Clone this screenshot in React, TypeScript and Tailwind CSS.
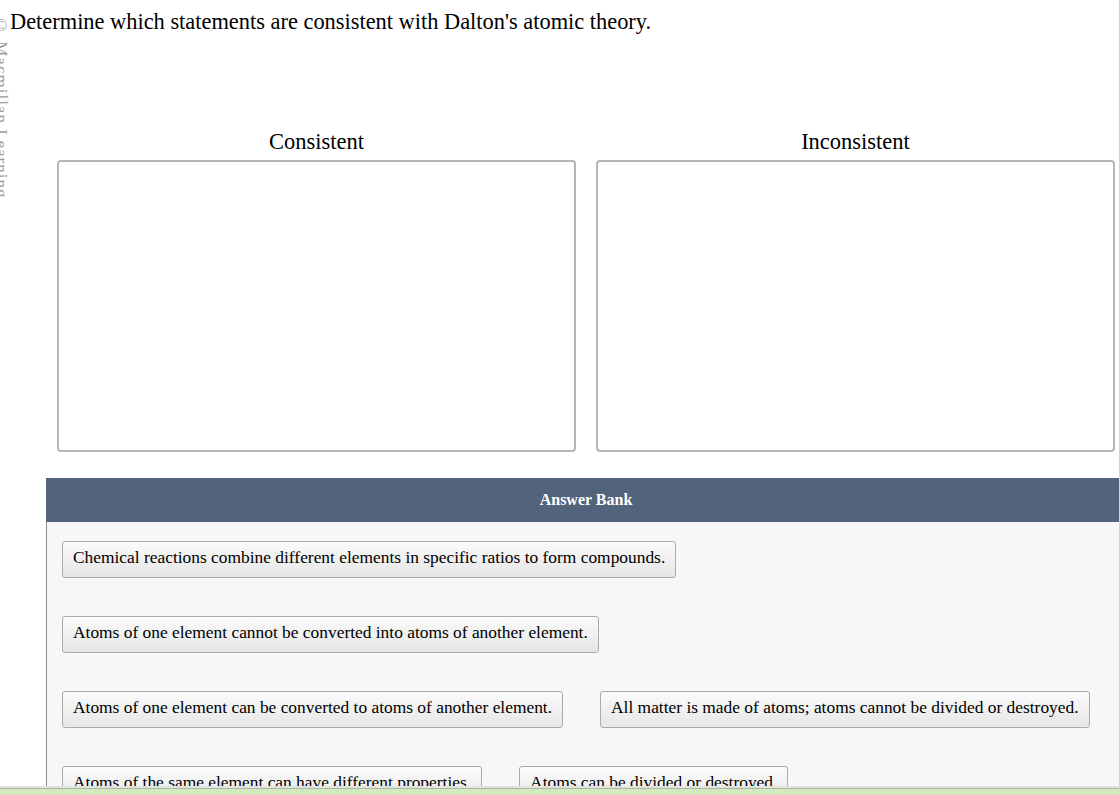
import React from 'react';

const serif = { fontFamily: '"Liberation Serif", "Times New Roman", serif' };

const answers = [
  'Chemical reactions combine different elements in specific ratios to form compounds.',
  'Atoms of one element cannot be converted into atoms of another element.',
  'Atoms of one element can be converted to atoms of another element.',
  'All matter is made of atoms; atoms cannot be divided or destroyed.',
  'Atoms of the same element can have different properties.',
  'Atoms can be divided or destroyed.',
];

function DropZone({ title }: { title: string }) {
  return (
    <div className="flex flex-col">
      <div className="h-[38px] flex items-center justify-center text-[22.5px] text-black pt-[2px]">{title}</div>
      <div className="h-[292px] bg-white border-2 border-[#b5b5b5] rounded-[4px]" />
    </div>
  );
}

export default function App() {
  return (
    <div className="relative min-h-screen bg-white overflow-hidden text-black" style={serif}>
      {/* faded vertical copyright on the left edge */}
      <div className="absolute left-[-12px] top-[16px] text-[17px] text-[#9c9c9c] [writing-mode:vertical-rl] tracking-[1px]">
        © Macmillan Learning
      </div>

      <h1 className="pl-[10px] pt-[8px] text-[22.4px] leading-[28px] font-normal">
        Determine which statements are consistent with Dalton's atomic theory.
      </h1>

      <div className="ml-[57px] w-[1058px] mt-[86px] grid grid-cols-2 gap-[20px]">
        <DropZone title="Consistent" />
        <DropZone title="Inconsistent" />
      </div>

      <div className="ml-[46px] w-[1080px] mt-[26px]">
        <div className="h-[44px] bg-[#51647b] flex items-center justify-center text-white text-[16px] font-bold">
          Answer Bank
        </div>
        <div className="bg-[#f7f7f7] border-l border-[#8c8c8c] pl-[15px] pr-[15px] pt-[19px] pb-[30px] flex flex-wrap gap-x-[37px] gap-y-[38px]">
          {answers.map((a) => (
            <div
              key={a}
              className="h-[37px] flex items-center px-[10px] pb-[4px] text-[17.4px] whitespace-nowrap border border-[#ababab] rounded-[3px] bg-gradient-to-b from-[#fbfbfb] to-[#e6e6e6]"
            >
              {a}
            </div>
          ))}
        </div>
      </div>

      {/* bottom bar */}
      <div className="fixed left-0 right-0 bottom-0 h-[9px] border-t-2 border-[#e2e2e2]">
        <div className="h-full bg-[#d4e9bf] border-t border-[#a9bb9c]" />
      </div>
    </div>
  );
}
